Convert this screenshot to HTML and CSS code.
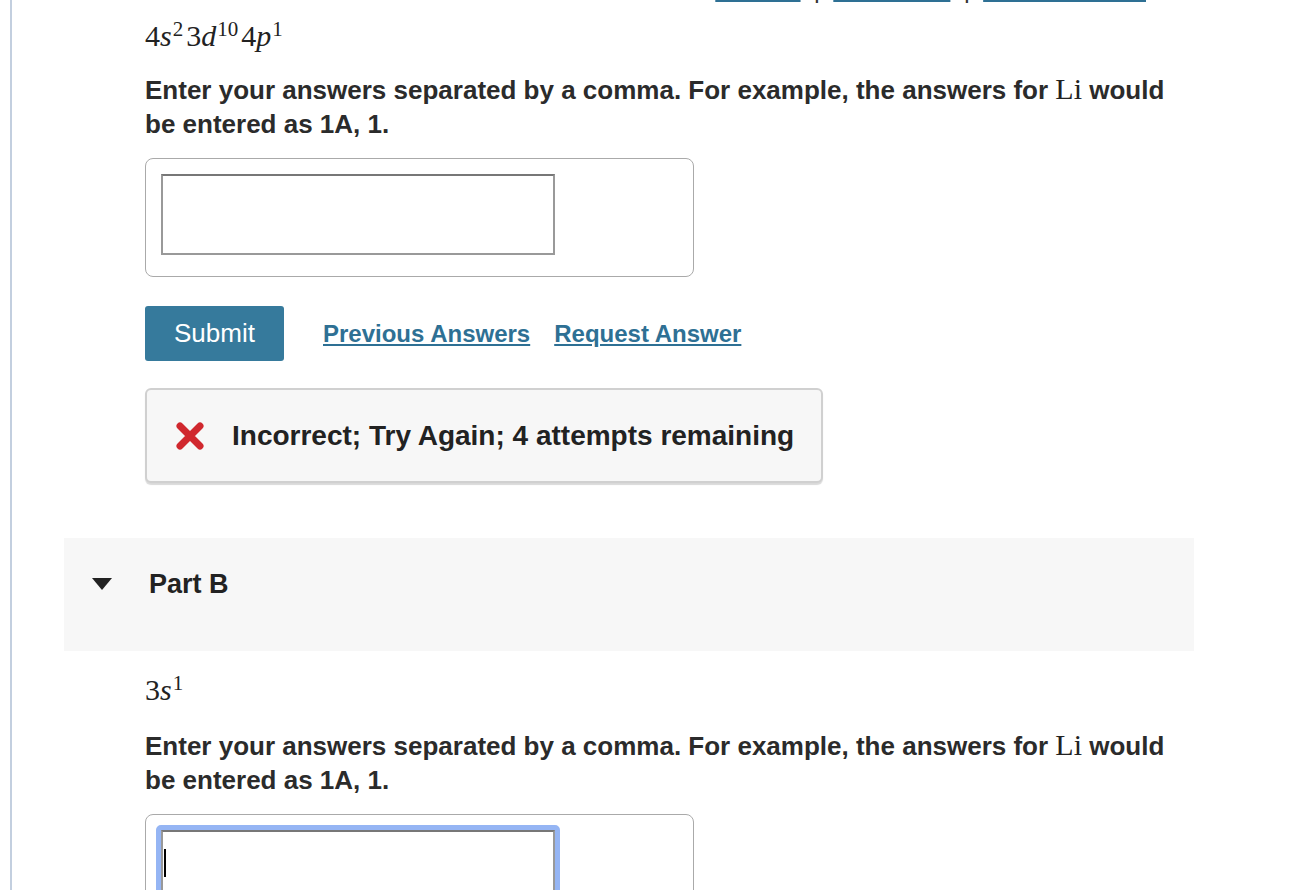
FILE: index.html
```html
<!DOCTYPE html>
<html lang="en">
<head>
    <meta charset="UTF-8">
    <title>Part A / Part B</title>
    <link rel="stylesheet" href="styles.css">
</head>
<body>

<div class="page">
    <div class="toolbar">
        <span class="tool-icon"></span>
        <a href="#">Review</a>
        <span class="sep">|</span>
        <a href="#">Constants</a>
        <span class="sep">|</span>
        <a href="#">Periodic Table</a>
    </div>

    <div class="part">
        <div class="part-body">
            <div class="formula">4<i>s</i><sup>2</sup>3<i>d</i><sup>10</sup>4<i>p</i><sup>1</sup></div>

            <p class="prompt">Enter your answers separated by a comma. For example, the answers for <span class="math">Li</span> would be entered as 1A, 1.</p>

            <div class="answer-box">
                <input type="text" class="answer-input">
            </div>

            <div class="actions">
                <button class="submit-button">Submit</button>
                <a href="#" class="action-link">Previous Answers</a>
                <a href="#" class="action-link">Request Answer</a>
            </div>

            <div class="feedback">
                <svg class="x-icon" width="30" height="28" viewBox="0 0 30 28">
                    <path d="M5 4 L25 24 M25 4 L5 24" stroke="#d0282e" stroke-width="7" stroke-linecap="round"/>
                </svg>
                <span>Incorrect; Try Again; 4 attempts remaining</span>
            </div>
        </div>
    </div>

    <div class="part">
        <div class="part-head">
            <span class="caret"></span>
            <span class="part-title">Part B</span>
        </div>
        <div class="part-body">
            <div class="formula">3<i>s</i><sup>1</sup></div>

            <p class="prompt">Enter your answers separated by a comma. For example, the answers for <span class="math">Li</span> would be entered as 1A, 1.</p>

            <div class="answer-box">
                <div class="focus-ring">
                    <input type="text" class="answer-input focused" value="">
                    <span class="caret-line"></span>
                </div>
            </div>
        </div>
    </div>
</div>

</body>
</html>
```

FILE: styles.css
```css
body {
    margin: 0;
    font-family: "Liberation Sans", Arial, sans-serif;
    color: #2b2b2b;
    background-color: #ffffff;
    overflow: hidden;
}

.page {
    margin-left: 10px;
    border-left: 2px solid #c3cfdf;
    min-height: 890px;
    width: 1184px;
}

.toolbar {
    display: flex;
    justify-content: flex-end;
    align-items: center;
    gap: 13px;
    margin-top: -26px;
    height: 30px;
    line-height: 30px;
    padding-right: 50px;
    font-size: 26px;
}

.toolbar a {
    color: #2e7094;
    text-decoration: underline;
}

.toolbar .sep {
    color: #333;
}

.tool-icon {
    width: 24px;
    height: 20px;
    background-color: #a9c4d6;
    margin-right: 8px;
}

.part {
    margin-left: 52px;
}

.part-body {
    padding-left: 81px;
}

.formula {
    font-family: "Liberation Serif", "Times New Roman", serif;
    font-size: 30px;
    padding-top: 12px;
    line-height: 40px;
    height: 40px;
    color: #222;
}

.formula i {
    font-style: italic;
    margin-right: 1px;
}

.formula sup {
    font-size: 21px;
    vertical-align: 10px;
    line-height: 0;
    margin-right: 3px;
}

.prompt {
    font-size: 26px;
    font-weight: bold;
    line-height: 34px;
    margin: 17px 0 0 0;
    width: 1040px;
    color: #2b2b2b;
}

.prompt .math {
    font-family: "Liberation Serif", "Times New Roman", serif;
    font-weight: normal;
    font-size: 30px;
    line-height: 20px;
    color: #222;
}

.answer-box {
    width: 517px;
    margin-top: 17px;
    padding: 15px 15px 21px 15px;
    border: 1px solid #aaa;
    border-radius: 8px;
}

.answer-input {
    display: block;
    width: 394px;
    height: 81px;
    box-sizing: border-box;
    border: 2px solid #999;
    border-top-color: #777;
    background: #fff;
    margin: 0;
    padding: 0;
    outline: none;
}

.actions {
    display: flex;
    align-items: center;
    margin-top: 29px;
}

.submit-button {
    width: 139px;
    height: 55px;
    background-color: #367a9c;
    color: #fff;
    border: none;
    border-radius: 3px;
    font-family: "Liberation Sans", Arial, sans-serif;
    font-size: 26px;
    margin-right: 39px;
    padding: 0;
}

.action-link {
    color: #2e7094;
    font-size: 24px;
    font-weight: bold;
    text-decoration: underline;
    margin-right: 24px;
}

.feedback {
    display: flex;
    align-items: center;
    width: 678px;
    height: 95px;
    box-sizing: border-box;
    margin-top: 27px;
    padding-left: 28px;
    background-color: #f7f7f7;
    border: 2px solid #d0d0d0;
    border-radius: 6px;
    box-shadow: 0 2px 1px rgba(0, 0, 0, 0.15);
    font-size: 28px;
    font-weight: bold;
    color: #222;
}

.x-icon {
    margin-right: 27px;
}

.part-head {
    display: flex;
    align-items: flex-start;
    box-sizing: border-box;
    height: 113px;
    padding-top: 31px;
    margin-top: 55px;
    background-color: #f7f7f7;
    width: 1130px;
}

.caret {
    width: 0;
    height: 0;
    border-left: 10px solid transparent;
    border-right: 10px solid transparent;
    border-top: 12px solid #222;
    margin-top: 9px;
    margin-left: 28px;
    margin-right: 37px;
}

.part-title {
    font-size: 27px;
    line-height: 30px;
    font-weight: bold;
    color: #222;
}

.part-head + .part-body .formula {
    padding-top: 19px;
}

.part-head + .part-body .prompt {
    margin-top: 19px;
}

.focus-ring {
    display: inline-block;
    position: relative;
    margin: -5px 0 0 -5px;
    border: 5px solid #95b5f4;
    border-radius: 5px;
}

.caret-line {
    position: absolute;
    left: 3px;
    top: 19px;
    width: 2px;
    height: 28px;
    background-color: #000;
}
```
